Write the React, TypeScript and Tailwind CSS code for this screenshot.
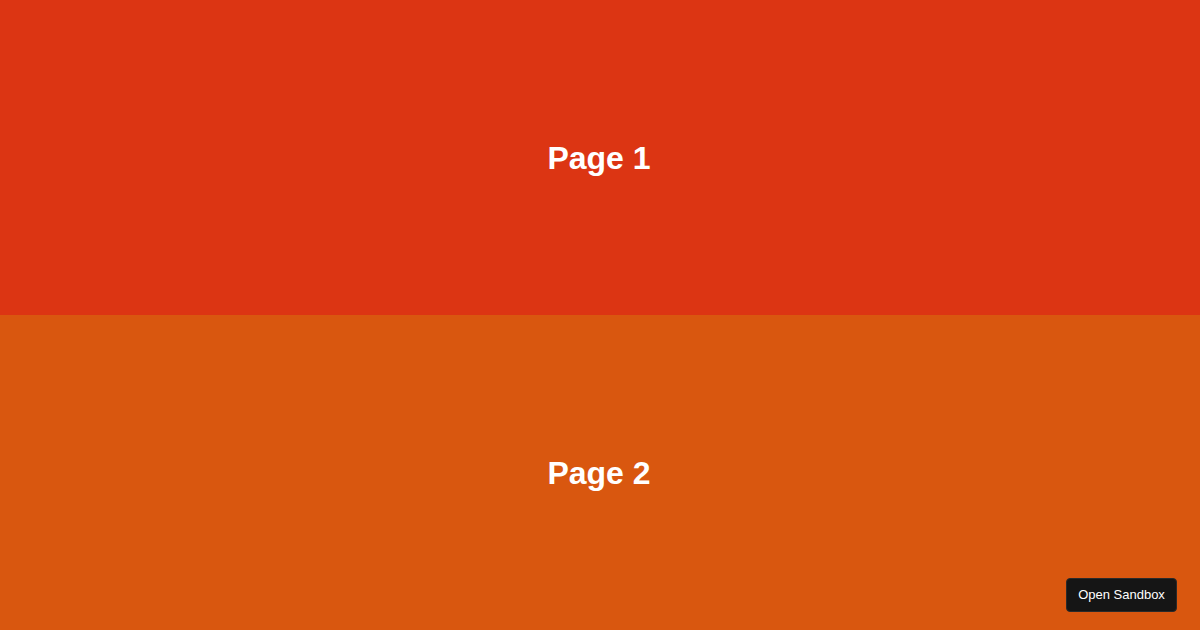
export default function App() {
  return (
    <div className="relative h-[630px] w-full overflow-hidden font-['Liberation_Sans',Arial,sans-serif]">
      <section className="flex h-[315px] items-center justify-center bg-[#dc3513]">
        <h1 className="-translate-x-px text-[32px] font-bold leading-none text-white">Page 1</h1>
      </section>
      <section className="flex h-[315px] items-center justify-center bg-[#d9570f]">
        <h1 className="-translate-x-px text-[32px] font-bold leading-none text-white">Page 2</h1>
      </section>
      <button className="absolute bottom-[18px] right-[23px] flex h-[34px] w-[111px] items-center justify-center rounded-[4px] border border-[#2a2a2a] bg-[#151515] text-[13px] text-white">
        Open Sandbox
      </button>
    </div>
  );
}
